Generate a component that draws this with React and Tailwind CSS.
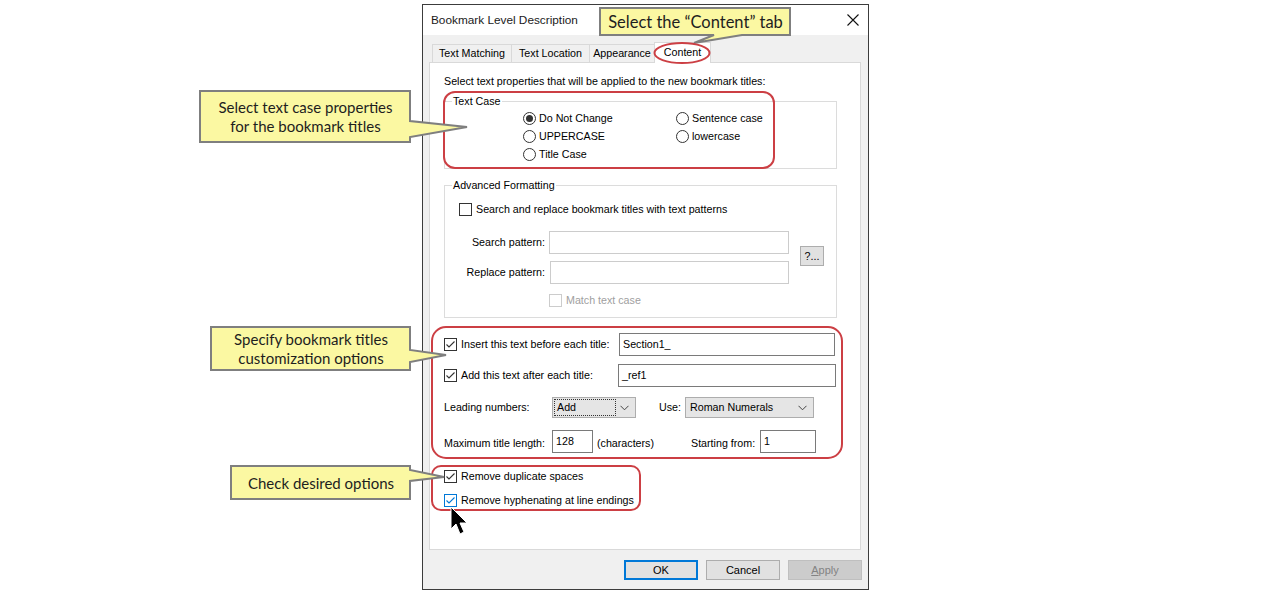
import React from 'react';

const ui = { fontFamily: '"Liberation Sans", Arial, sans-serif' };
const note = { fontFamily: 'Lato, "Noto Sans", sans-serif' };

const Check = ({ checked, blue, disabled }) => (
  <span
    className={`w-[13px] h-[13px] shrink-0 border bg-white flex items-center justify-center
      ${blue ? 'border-[#0078d7]' : disabled ? 'border-[#cccccc]' : 'border-[#333333]'}`}
  >
    {checked && (
      <svg width="11" height="11" viewBox="0 0 11 11">
        <path d="M1.5 5.5 L4 8 L9.5 2.5" fill="none" stroke={blue ? '#0078d7' : '#333'} strokeWidth="1.1" />
      </svg>
    )}
  </span>
);

const CheckRow = ({ checked, blue, disabled, children, className = '' }) => (
  <div className={`h-[16px] flex items-center gap-[4px] ${className}`}>
    <Check checked={checked} blue={blue} disabled={disabled} />
    <span className={disabled ? 'text-[#a0a0a0]' : 'text-black'}>{children}</span>
  </div>
);

const Radio = ({ on, children }) => (
  <div className="h-[18px] flex items-center gap-[3px]">
    <span className="w-[13px] h-[13px] rounded-full border border-[#333333] bg-white flex items-center justify-center">
      {on && <span className="w-[7px] h-[7px] rounded-full bg-[#333333]" />}
    </span>
    <span>{children}</span>
  </div>
);

const Field = ({ w, value }) => (
  <div className={`${w} h-[23px] border border-[#7a7a7a] bg-white flex items-center px-[3px] text-black`}>
    {value}
  </div>
);

const Chevron = () => (
  <svg width="9" height="6" viewBox="0 0 9 6">
    <path d="M0.5 0.8 L4.5 4.8 L8.5 0.8" fill="none" stroke="#444" strokeWidth="1" />
  </svg>
);

const Group = ({ label, className = '', children }) => (
  <div className={`relative w-[393px] border border-[#dcdcdc] ${className}`}>
    <span className="absolute -top-[7px] left-[7px] bg-white px-[1px] leading-[13px] text-black">{label}</span>
    {children}
  </div>
);

const Btn = ({ children, variant }) => {
  const cls =
    variant === 'default'
      ? 'border-2 border-[#0078d7] bg-[#e1e1e1] text-black'
      : variant === 'disabled'
      ? 'border border-[#bfbfbf] bg-[#cccccc] text-[#838383]'
      : 'border border-[#adadad] bg-[#e1e1e1] text-black';
  return <div className={`w-[74px] h-[20px] flex items-center justify-center text-[11px] ${cls}`}>{children}</div>;
};

function Dialog() {
  return (
    <div
      style={ui}
      className="absolute z-0 left-[422px] top-[4px] w-[447px] h-[586px] border border-[#3c3c3c] bg-[#f0f0f0] flex flex-col text-[10.7px] leading-[13px]"
    >
      {/* title bar */}
      <div className="h-[30px] bg-white flex items-center justify-between pl-[8px] pr-[9px]">
        <span className="text-[11.8px] text-[#1a1a1a] mt-[1px]">Bookmark Level Description</span>
        <svg width="12" height="12" viewBox="0 0 12 12">
          <path d="M0.5 0.5 L11.5 11.5 M11.5 0.5 L0.5 11.5" stroke="#111" strokeWidth="1.1" />
        </svg>
      </div>

      <div className="flex-1 pl-[6px] pt-[7px] flex flex-col">
        {/* tabs */}
        <div className="h-[20px] flex items-end pl-[3px]">
          <div className="w-[80px] h-[18px] border border-b-0 border-[#d9d9d9] flex items-center justify-center">Text Matching</div>
          <div className="w-[78px] h-[18px] border border-b-0 border-l-0 border-[#d9d9d9] flex items-center justify-center">Text Location</div>
          <div className="w-[65px] h-[18px] border border-b-0 border-l-0 border-[#d9d9d9] flex items-center justify-center">Appearance</div>
          <div className="relative z-10 -ml-px -mb-px w-[57px] h-[21px] bg-white border border-b-0 border-[#d9d9d9] flex items-center justify-center pb-[2px]">Content</div>
        </div>

        {/* panel */}
        <div className="w-[432px] h-[488px] bg-white border border-[#d9d9d9] pl-[14px] flex flex-col">
          <p className="mt-[12px] h-[13px]">Select text properties that will be applied to the new bookmark titles:</p>

          <Group label="Text Case" className="mt-[13px] h-[68px]">
            <div className="grid grid-cols-[153px_1fr] pl-[78px] pt-[7px]">
              <Radio on>Do Not Change</Radio>
              <Radio>Sentence case</Radio>
              <Radio>UPPERCASE</Radio>
              <Radio>lowercase</Radio>
              <Radio>Title Case</Radio>
            </div>
          </Group>

          <Group label="Advanced Formatting" className="mt-[16px] h-[133px]">
            <CheckRow className="mt-[15px] ml-[14px]">Search and replace bookmark titles with text patterns</CheckRow>
            <div className="mt-[14px] flex items-center">
              <div className="flex flex-col gap-[7px]">
                <div className="flex items-center">
                  <span className="w-[100px] text-right">Search pattern:</span>
                  <div className="ml-[4px] w-[240px] h-[23px] border border-[#cccccc] bg-white" />
                </div>
                <div className="flex items-center">
                  <span className="w-[100px] text-right">Replace pattern:</span>
                  <div className="ml-[5px] w-[239px] h-[23px] border border-[#cccccc] bg-white" />
                </div>
              </div>
              <div className="ml-[11px] mt-[-3px] w-[24px] h-[20px] border border-[#adadad] bg-[#e1e1e1] flex items-center justify-center text-black">?...</div>
            </div>
            <CheckRow disabled className="mt-[8px] ml-[104px]">Match text case</CheckRow>
          </Group>

          <div className="mt-[15px] h-[23px] flex items-center">
            <div className="w-[175px]"><CheckRow checked>Insert this text before each title:</CheckRow></div>
            <Field w="w-[216px]" value="Section1_" />
          </div>
          <div className="mt-[8px] h-[23px] flex items-center">
            <div className="w-[174px]"><CheckRow checked>Add this text after each title:</CheckRow></div>
            <Field w="w-[218px]" value="_ref1" />
          </div>
          <div className="mt-[10px] h-[21px] flex items-center">
            <span className="w-[108px]">Leading numbers:</span>
            <div className="w-[84px] h-[21px] border border-[#adadad] bg-[#e5e5e5] flex items-center pl-[1px] pr-[6px] justify-between">
              <span className="w-[62px] h-[17px] border border-dotted border-[#333] flex items-center pl-[2px] text-black">Add</span>
              <Chevron />
            </div>
            <span className="ml-[23px] w-[26px]">Use:</span>
            <div className="w-[129px] h-[21px] border border-[#adadad] bg-[#e5e5e5] flex items-center justify-between pl-[4px] pr-[6px]">
              <span>Roman Numerals</span>
              <Chevron />
            </div>
          </div>
          <div className="mt-[12px] h-[23px] flex items-center">
            <span className="w-[108px] mt-[3px]">Maximum title length:</span>
            <Field w="w-[41px]" value="128" />
            <span className="ml-[4px] w-[94px] mt-[3px]">(characters)</span>
            <span className="w-[69px] mt-[3px]">Starting from:</span>
            <Field w="w-[56px]" value="1" />
          </div>

          <CheckRow checked className="mt-[15px]">Remove duplicate spaces</CheckRow>
          <CheckRow checked blue className="mt-[8px]">Remove hyphenating at line endings</CheckRow>
        </div>

        {/* buttons */}
        <div className="mt-[10px] flex justify-end gap-[8px] pr-[6px]">
          <Btn variant="default">OK</Btn>
          <Btn>Cancel</Btn>
          <Btn variant="disabled"><span className="underline">A</span>pply</Btn>
        </div>
      </div>
    </div>
  );
}

const Callout = ({ className, size = 'text-[15px]', children }) => (
  <div style={note} className={`absolute z-30 flex items-center justify-center text-center leading-[19px] text-[#1e1e1e] ${size} ${className}`}>
    {children}
  </div>
);

export default function App() {
  const red = '#cc3f44';
  const fill = '#fbf8a2';
  const edge = '#7f7f7f';
  return (
    <div className="relative w-[1280px] h-[593px] bg-white overflow-hidden">
      <Dialog />

      <svg className="absolute z-20 inset-0 pointer-events-none" width="1280" height="593" viewBox="0 0 1280 593">
        <rect x="444" y="92" width="330" height="76" rx="11" fill="none" stroke={red} strokeWidth="2" />
        <rect x="432" y="327" width="410" height="131" rx="14" fill="none" stroke={red} strokeWidth="2" />
        <rect x="432" y="466" width="208" height="44" rx="9" fill="none" stroke={red} strokeWidth="2" />

        <path d="M600 8 H790 V35 H742 L694 43 L714 35 H600 Z" fill={fill} stroke={edge} strokeWidth="2" strokeLinejoin="miter" />
        <path d="M200 91 H410 V121 L467 127 L410 137 V142 H200 Z" fill={fill} stroke={edge} strokeWidth="2" />
        <path d="M211 327 H410 V350 L446 355 L410 362 V370 H211 Z" fill={fill} stroke={edge} strokeWidth="2" />
        <path d="M231 466 H410 V470 L444 477 L410 481 V499 H231 Z" fill={fill} stroke={edge} strokeWidth="2" />

        <ellipse cx="682" cy="53" rx="27.5" ry="10" fill="none" stroke={red} strokeWidth="2" />

        {/* mouse pointer */}
        <path
          d="M451 507 L451 529 L456 524 L460 534 L464 532 L460 523 L467 523 Z"
          fill="#000"
          stroke="#fff"
          strokeWidth="1"
          strokeLinejoin="round"
        />
      </svg>

      <Callout className="left-[600px] top-[8px] w-[191px] h-[28px]" size="text-[16.5px]">Select the “Content” tab</Callout>
      <Callout className="left-[200px] top-[91px] w-[211px] h-[52px]">
        Select text case properties<br />for the bookmark titles
      </Callout>
      <Callout className="left-[211px] top-[327px] w-[200px] h-[44px]">
        Specify bookmark titles<br />customization options
      </Callout>
      <Callout className="left-[231px] top-[466px] w-[180px] h-[34px]">Check desired options</Callout>
    </div>
  );
}
